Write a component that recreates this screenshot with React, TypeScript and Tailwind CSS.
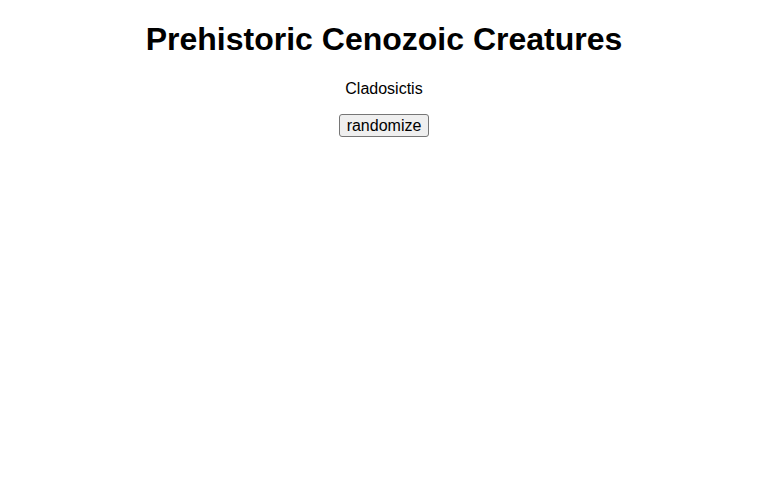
export default function App() {
  return (
    <div className="min-h-[480px] bg-white text-center font-['Liberation_Sans',Arial,sans-serif] text-black">
      <h1 className="pt-[21px] text-[32px] font-bold leading-[37px]">
        Prehistoric Cenozoic Creatures
      </h1>
      <p className="mt-[21px] text-base leading-[19px]">Cladosictis</p>
      <button
        type="button"
        className="mt-4 rounded-[3px] border border-[#767676] bg-[#efefef] px-[7px] py-[1px] text-base leading-[19px] text-black"
      >
        randomize
      </button>
    </div>
  );
}
